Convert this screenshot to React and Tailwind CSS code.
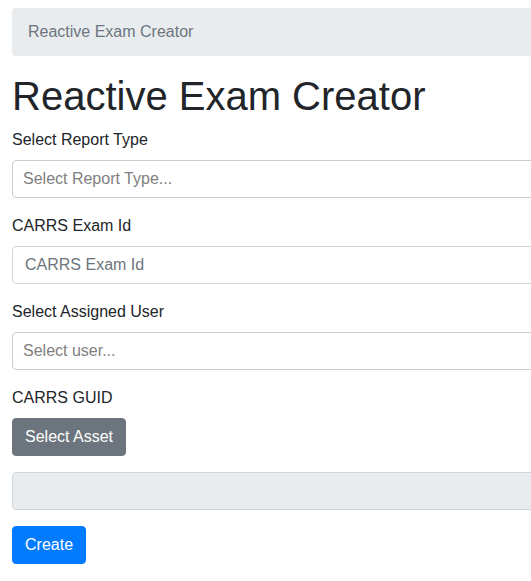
import React from "react";

export default function App() {
  return (
    <div className="overflow-hidden min-h-screen bg-white text-[#212529] font-['Liberation_Sans',Arial,sans-serif] text-base leading-6">
      <div className="w-[640px] px-3 pt-2">
        {/* Breadcrumb */}
        <nav className="bg-[#e9ecef] rounded px-4 py-3 mb-4">
          <span className="text-[#6c757d]">Reactive Exam Creator</span>
        </nav>

        <h1 className="text-[40px] leading-[48px] font-normal mb-2">Reactive Exam Creator</h1>

        {/* Report type */}
        <div className="mb-4">
          <label className="block mb-2">Select Report Type</label>
          <div className="h-[38px] border border-[#cccccc] rounded flex items-center px-[10px] text-[#808080]">
            Select Report Type...
          </div>
        </div>

        {/* Exam id */}
        <div className="mb-4">
          <label className="block mb-2">CARRS Exam Id</label>
          <input
            type="text"
            placeholder="CARRS Exam Id"
            className="block w-full h-[38px] border border-[#ced4da] rounded px-3 py-1.5 placeholder:text-[#6c757d] outline-none"
          />
        </div>

        {/* Assigned user */}
        <div className="mb-4">
          <label className="block mb-2">Select Assigned User</label>
          <div className="h-[38px] border border-[#cccccc] rounded flex items-center px-[10px] text-[#808080]">
            Select user...
          </div>
        </div>

        {/* GUID */}
        <div className="mb-4">
          <label className="block mb-2">CARRS GUID</label>
          <button className="h-[38px] px-3 rounded border border-[#6c757d] bg-[#6c757d] text-white mb-4">Select Asset</button>
          <input
            type="text"
            readOnly
            className="block w-full h-[38px] border border-[#ced4da] rounded bg-[#e9ecef] px-3 outline-none"
          />
        </div>

        <button className="h-[38px] px-3 rounded border border-[#007bff] bg-[#007bff] text-white">Create</button>
      </div>
    </div>
  );
}
